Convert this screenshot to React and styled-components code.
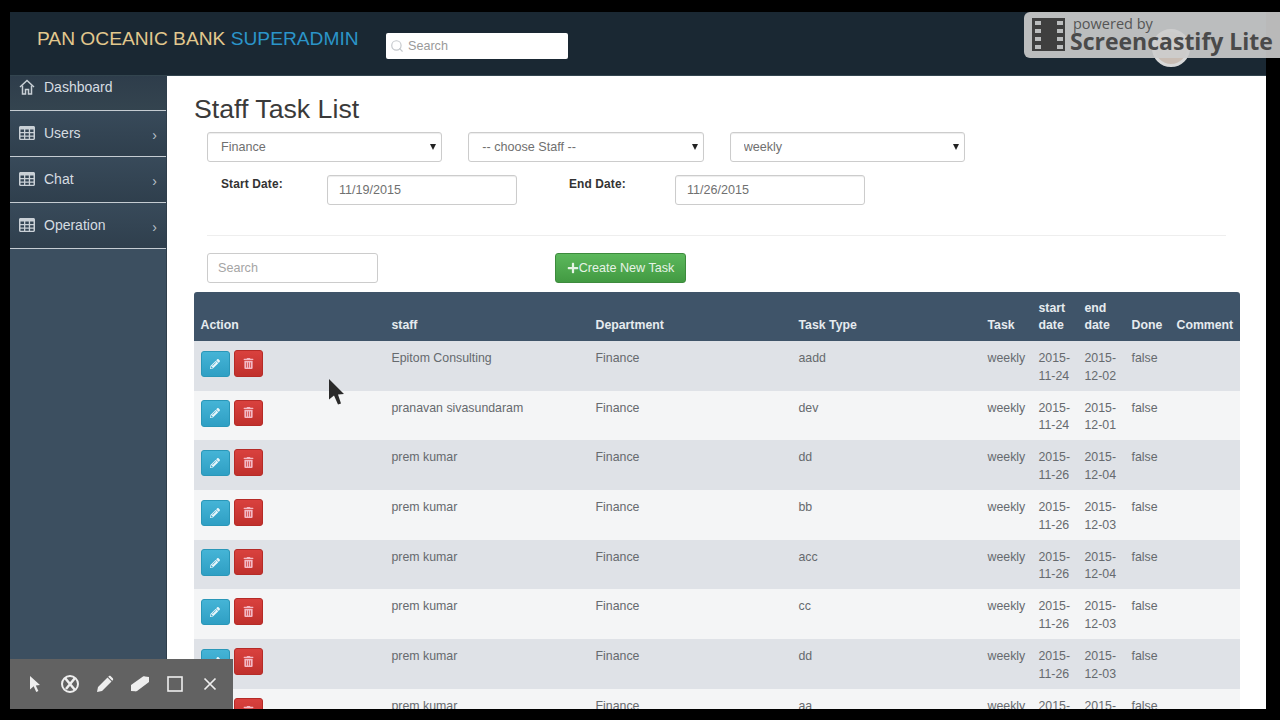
import React from 'react'
import styled, { createGlobalStyle } from 'styled-components'
import { FaPencilAlt, FaTrashAlt, FaPlus } from 'react-icons/fa'
import { FiSearch } from 'react-icons/fi'

const GlobalStyle = createGlobalStyle`
    html, body {
        margin: 0;
        height: 100%;
        background: #000;
        overflow: hidden;
    }
    * { box-sizing: border-box; }
    #root { height: 100%; }
`

const Frame = styled.div`
    position: relative;
    width: 1280px;
    height: 720px;
    padding: 12px 14px 11px 10px;
    background: #000;
    font-family: "Liberation Sans", Arial, sans-serif;
    overflow: hidden;
`
const Page = styled.div`
    display: flex;
    flex-direction: column;
    height: 100%;
    overflow: hidden;
    background: #fff;
`
const Navbar = styled.header`
    flex: none;
    display: flex;
    align-items: center;
    height: 64px;
    padding: 0 76px 0 27px;
    background: #1a2833;
    border-bottom: 1px solid #33454f;
`
const Brand = styled.div`
    width: 349px;
    margin-top: -9px;
    font-size: 19.2px;
    white-space: nowrap;
    color: #e2c88e;
    span { color: #2b95c9; }
`
const NavSearch = styled.div`
    display: flex;
    align-items: center;
    gap: 4px;
    width: 182px;
    height: 26px;
    margin-top: 5px;
    padding-left: 4px;
    background: #fff;
    border-radius: 2px;
    font-size: 12.6px;
    color: #9a9a9a;
    svg { color: #c4c8cc; }
`
const Avatar = styled.div`
    width: 38px;
    height: 38px;
    margin-left: auto;
    margin-top: 8px;
    border-radius: 50%;
    border: 3px solid #d8d8d8;
    background: #c9bdb4;
`
const Body = styled.div`
    flex: 1;
    display: flex;
    min-height: 0;
`
const Sidebar = styled.nav`
    flex: none;
    width: 157px;
    background: #3c4f60;
    border-right: 1px solid #2f3e4b;
`
const SideItem = styled.div`
    display: flex;
    align-items: ${p => (p.$top ? 'flex-start' : 'center')};
    height: ${p => (p.$top ? '35px' : '46px')};
    padding: ${p => (p.$top ? '3px 0 0 9px' : '0 0 2px 9px')};
    border-bottom: 1px solid #c5ccd2;
    background: linear-gradient(${p => (p.$top ? '#2e3d4b, #34444f' : '#384a5a, #2f3f4d')});
    font-size: 14px;
    color: #d6dce1;
    svg { flex: none; margin-right: 9px; color: #c9d0d6; }
`
const Chevron = styled.span`
    margin-left: auto;
    margin-right: 9px;
    margin-top: 4px;
    font-size: 14px;
    color: #b8c1c9;
`
const Main = styled.main`
    flex: 1;
    min-width: 0;
    padding: 18px 26px 0 27px;
`
const Title = styled.h1`
    margin: 0 0 8px;
    font-size: 26.7px;
    font-weight: 400;
    line-height: 30px;
    color: #3a3a3a;
`
const Form = styled.div`
    padding: 0 14px 0 13px;
`
const SelectRow = styled.div`
    display: flex;
    gap: 26px;
    margin-bottom: 13px;
`
const SelectWrap = styled.div`
    position: relative;
    width: 235.33px;
    &::after {
        content: "";
        position: absolute;
        top: 12px;
        right: 6px;
        border-top: 6px solid #222;
        border-left: 3px solid transparent;
        border-right: 3px solid transparent;
        pointer-events: none;
    }
`
const Select = styled.select`
    display: block;
    width: 100%;
    height: 30px;
    padding-left: 13px;
    appearance: none;
    background: #fff;
    border: 1px solid #ccc;
    border-radius: 3px;
    box-shadow: inset 0 1px 1px rgba(0, 0, 0, 0.075);
    font-family: inherit;
    font-size: 12.6px;
    color: #707070;
`
const DateRow = styled.div`
    display: flex;
    align-items: flex-start;
`
const DateLabel = styled.label`
    width: ${p => p.$w}px;
    padding: 2px 0 0 ${p => p.$pad}px;
    font-size: 11.9px;
    font-weight: 700;
    letter-spacing: 0.15px;
    color: #333;
`
const DateInput = styled.input`
    width: 190px;
    height: 30px;
    margin-right: 52px;
    padding: 0 11px;
    border: 1px solid #ccc;
    border-radius: 3px;
    box-shadow: inset 0 1px 1px rgba(0, 0, 0, 0.075);
    font-family: inherit;
    font-size: 12.6px;
    color: #707070;
`
const Divider = styled.hr`
    height: 1px;
    margin: 30px 0 17px;
    border: 0;
    background: #eeeeee;
`
const ToolRow = styled.div`
    display: flex;
    margin-bottom: 9px;
`
const SearchInput = styled.input`
    width: 171px;
    height: 30px;
    margin-right: 177px;
    padding: 0 10px;
    border: 1px solid #ccc;
    border-radius: 3px;
    font-family: inherit;
    font-size: 12.6px;
    &::placeholder { color: #a5a5a5; }
`
const CreateButton = styled.button`
    display: flex;
    align-items: center;
    justify-content: center;
    width: 131px;
    height: 30px;
    padding: 0;
    border: 1px solid #3d8b3d;
    border-radius: 3px;
    background: linear-gradient(#5cb85c, #429a42);
    font-family: inherit;
    font-size: 12.6px;
    color: #e6f3e6;
`
const Table = styled.table`
    width: 1046px;
    border-collapse: collapse;
    table-layout: fixed;
    font-size: 12.35px;
    line-height: 17.5px;
    color: #666a6e;
`
const Th = styled.th`
    height: 49px;
    padding: 0 0 7px 6.5px;
    vertical-align: bottom;
    text-align: left;
    font-size: 12.3px;
    font-weight: 700;
    line-height: 17px;
    color: #e6ebef;
    background: #3f5469;
    &:first-child { border-top-left-radius: 3px; }
    &:last-child { border-top-right-radius: 3px; }
`
const Row = styled.tr`
    height: 49.7px;
    background: ${p => (p.$odd ? '#dfe2e7' : '#f4f5f6')};
`
const Td = styled.td`
    padding: 9px 0 0 6.5px;
    vertical-align: top;
    overflow: hidden;
`
const IconButton = styled.button`
    display: inline-flex;
    align-items: center;
    justify-content: center;
    width: 29.5px;
    height: 26.5px;
    margin-right: 3.5px;
    padding: 0;
    border: 1px solid ${p => (p.$red ? '#b52b27' : '#2a97b8')};
    border-radius: 3px;
    background: ${p => (p.$red ? 'linear-gradient(#d9413e, #c0302c)' : 'linear-gradient(#45b4d6, #2f9fc4)')};
    color: ${p => (p.$red ? '#f3b8c4' : '#eaf6fb')};
`
const Watermark = styled.div`
    position: absolute;
    top: 12px;
    left: 1024px;
    display: flex;
    width: 256px;
    height: 46px;
    padding: 6px 0 0 8px;
    border-radius: 6px 0 0 6px;
    background: rgba(205, 205, 205, 0.9);
    color: #4a4a4a;
    svg { flex: none; }
`
const WatermarkText = styled.div`
    margin-left: 5px;
    font-family: "Open Sans", "Noto Sans", sans-serif;
`
const Powered = styled.div`
    margin-left: 3px;
    font-size: 14.5px;
    line-height: 11px;
    color: #555;
`
const Product = styled.div`
    margin-top: -3px;
    font-size: 23px;
    font-weight: 700;
    line-height: 30px;
    white-space: nowrap;
`
const Toolbar = styled.div`
    position: absolute;
    left: 10px;
    top: 659px;
    display: flex;
    align-items: center;
    width: 223px;
    height: 50px;
    padding-left: 7px;
    background: #626262;
    color: #eee;
`
const ToolSlot = styled.div`
    display: flex;
    align-items: center;
    justify-content: center;
    width: 35px;
`
const Cursor = styled.svg`
    position: absolute;
    left: 328px;
    top: 378px;
`

const TableIcon = () => (
    <svg width="16" height="14" viewBox="0 0 16 14">
        <path fill="currentColor" fillRule="evenodd" d="M0 1.5C0 .7.7 0 1.5 0h13c.8 0 1.5.7 1.5 1.5v11c0 .8-.7 1.5-1.5 1.5h-13C.7 14 0 13.300 0 12.500zM1.500 3.500v2.500h3.500V3.500zm4.800 0v2.500h3.500V3.500zm4.800 0v2.500h3.400V3.500zM1.500 7.200v2.300h3.500V7.200zm4.800 0v2.300h3.500V7.200zm4.800 0v2.300h3.400V7.200zM1.500 10.700v2h3.500v-2zm4.800 0v2h3.500v-2zm4.800 0v2h3.400v-2z" />
    </svg>
)

const HomeIcon = () => (
    <svg width="16" height="16" viewBox="0 0 16 16" fill="none" stroke="currentColor" strokeWidth="1.500">
        <path d="M1 8l7-6.500L15 8" />
        <path d="M3.500 6.500V15h3v-4.500h3V15h3V6.500" />
    </svg>
)

const ToolCursor = () => (
    <svg width="14" height="18" viewBox="0 0 14 18">
        <path fill="currentColor" d="M2 1l10 9-4.200.4 2.600 5.600-2.200 1-2.500-5.700L2 14.500z" />
    </svg>
)
const ToolSpot = () => (
    <svg width="20" height="20" viewBox="0 0 20 20" fill="none" stroke="currentColor">
        <circle cx="10" cy="10" r="8" strokeWidth="2" />
        <path d="M5 4l10 12M15 4L6 15" strokeWidth="2.500" />
    </svg>
)
const ToolPen = () => (
    <svg width="18" height="18" viewBox="0 0 18 18">
        <path fill="currentColor" d="M1 17l1-5L11.500 2.500l4 4L6 16zM12.800 1.300c.6-.6 1.500-.6 2 0l2 2c.5.500.5 1.400 0 2l-.6.500-4-4z" />
    </svg>
)
const ToolEraser = () => (
    <svg width="20" height="18" viewBox="0 0 20 18">
        <path fill="currentColor" d="M1 10L13 1.500c.7-.4 1.500-.4 2 0l4 .5v5L7 16c-.8.500-1.500.500-2 .3L1 16z" />
    </svg>
)
const ToolSquare = () => (
    <svg width="16" height="16" viewBox="0 0 16 16" fill="none" stroke="currentColor" strokeWidth="1.600">
        <rect x="1" y="1" width="14" height="14" />
    </svg>
)
const ToolClose = () => (
    <svg width="14" height="14" viewBox="0 0 14 14" fill="none" stroke="currentColor" strokeWidth="1.700">
        <path d="M1.500 1.500l11 11M12.500 1.500l-11 11" />
    </svg>
)

const FilmIcon = () => (
    <svg width="33" height="33" viewBox="0 0 33 33">
        <path fill="#3f3f3f" fillRule="evenodd" d="M0 0h33v33H0zM3 3v4h6V3zm0 8v4h6v-4zm0 8v4h6v-4zm0 8v4h6v-4zM25 3v4h6V3zm0 8v4h6v-4zm0 8v4h6v-4zm0 8v4h6v-4z" />
    </svg>
)

const columns = [191, 204, 203, 189, 51, 46, 47, 45, 70]
const headers = ['Action', 'staff', 'Department', 'Task Type', 'Task', 'start date', 'end date', 'Done', 'Comment']

const tasks = [
    { staff: 'Epitom Consulting', type: 'aadd', start: '2015-11-24', end: '2015-12-02' },
    { staff: 'pranavan sivasundaram', type: 'dev', start: '2015-11-24', end: '2015-12-01' },
    { staff: 'prem kumar', type: 'dd', start: '2015-11-26', end: '2015-12-04' },
    { staff: 'prem kumar', type: 'bb', start: '2015-11-26', end: '2015-12-03' },
    { staff: 'prem kumar', type: 'acc', start: '2015-11-26', end: '2015-12-04' },
    { staff: 'prem kumar', type: 'cc', start: '2015-11-26', end: '2015-12-03' },
    { staff: 'prem kumar', type: 'dd', start: '2015-11-26', end: '2015-12-03' },
    { staff: 'prem kumar', type: 'aa', start: '2015-11-26', end: '2015-12-03' },
]

const tools = [ToolCursor, ToolSpot, ToolPen, ToolEraser, ToolSquare, ToolClose]

const App = () => {
    return (
        <Frame>
            <GlobalStyle />
            <Page>
                <Navbar>
                    <Brand>PAN OCEANIC BANK <span>SUPERADMIN</span></Brand>
                    <NavSearch><FiSearch size={14} />Search</NavSearch>
                    <Avatar />
                </Navbar>
                <Body>
                    <Sidebar>
                        <SideItem $top><HomeIcon />Dashboard</SideItem>
                        <SideItem><TableIcon />Users<Chevron>›</Chevron></SideItem>
                        <SideItem><TableIcon />Chat<Chevron>›</Chevron></SideItem>
                        <SideItem><TableIcon />Operation<Chevron>›</Chevron></SideItem>
                    </Sidebar>
                    <Main>
                        <Title>Staff Task List</Title>
                        <Form>
                            <SelectRow>
                                <SelectWrap><Select defaultValue="Finance"><option>Finance</option></Select></SelectWrap>
                                <SelectWrap><Select defaultValue="-- choose Staff --"><option>-- choose Staff --</option></Select></SelectWrap>
                                <SelectWrap><Select defaultValue="weekly"><option>weekly</option></Select></SelectWrap>
                            </SelectRow>
                            <DateRow>
                                <DateLabel $w={120} $pad={14}>Start Date:</DateLabel>
                                <DateInput readOnly value="11/19/2015" />
                                <DateLabel $w={106} $pad={0}>End Date:</DateLabel>
                                <DateInput readOnly value="11/26/2015" />
                            </DateRow>
                            <Divider />
                            <ToolRow>
                                <SearchInput placeholder="Search" />
                                <CreateButton><FaPlus size={12} />Create New Task</CreateButton>
                            </ToolRow>
                        </Form>
                        <Table>
                            <colgroup>
                                {columns.map((w, i) => <col key={i} width={w} />)}
                            </colgroup>
                            <thead>
                                <tr>
                                    {headers.map(h => <Th key={h}>{h}</Th>)}
                                </tr>
                            </thead>
                            <tbody>
                                {tasks.map((task, i) => (
                                    <Row key={i} $odd={i % 2 === 0}>
                                        <Td>
                                            <IconButton><FaPencilAlt size={10} /></IconButton>
                                            <IconButton $red><FaTrashAlt size={11} /></IconButton>
                                        </Td>
                                        <Td>{task.staff}</Td>
                                        <Td>Finance</Td>
                                        <Td>{task.type}</Td>
                                        <Td>weekly</Td>
                                        <Td>{task.start}</Td>
                                        <Td>{task.end}</Td>
                                        <Td>false</Td>
                                        <Td />
                                    </Row>
                                ))}
                            </tbody>
                        </Table>
                    </Main>
                </Body>
            </Page>
            <Watermark>
                <FilmIcon />
                <WatermarkText>
                    <Powered>powered by</Powered>
                    <Product>Screencastify Lite</Product>
                </WatermarkText>
            </Watermark>
            <Toolbar>
                {tools.map((Tool, i) => <ToolSlot key={i}><Tool /></ToolSlot>)}
            </Toolbar>
            <Cursor width="18" height="28" viewBox="0 0 18 28">
                <path fill="#2a2a2a" d="M1 1l15 15-6 .5 3 9-3 1-4-9-5 4z" />
            </Cursor>
        </Frame>
    )
}

export default App
